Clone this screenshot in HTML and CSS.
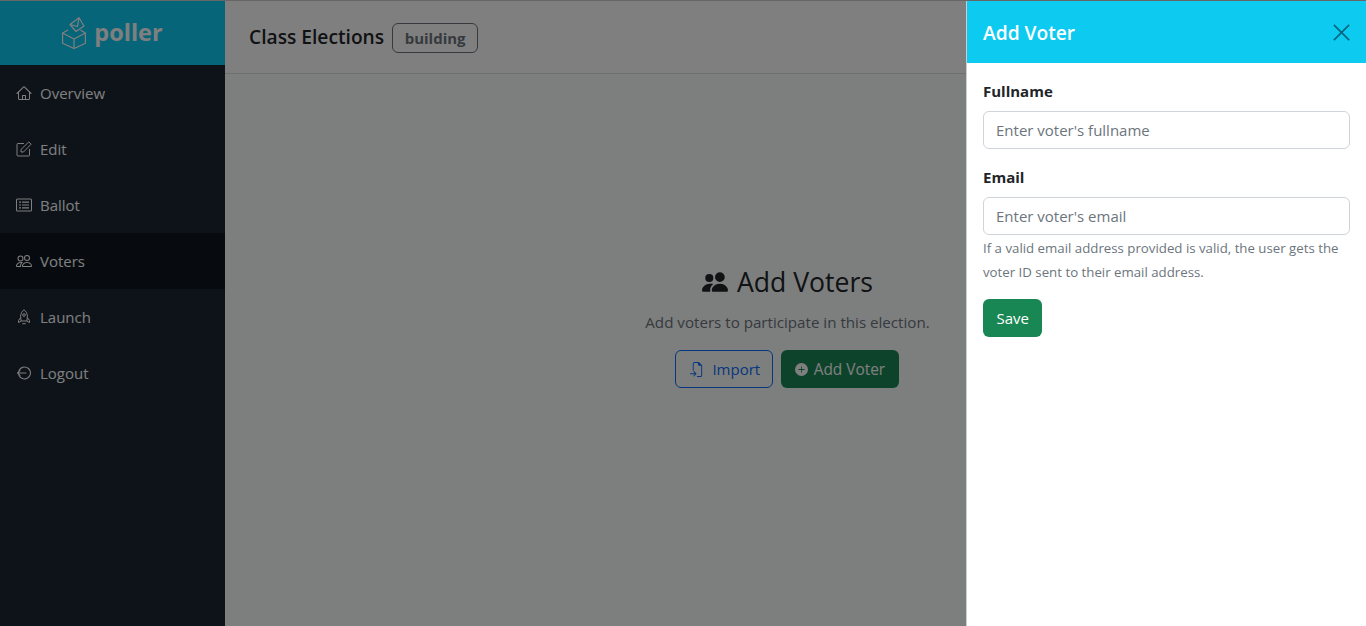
FILE: index.html
```html
<!DOCTYPE html>
<html>
<head lang="en">
    <meta charset="UTF-8">
    <title>Add Voter</title>
    <link rel="stylesheet" href="styles.css">
</head>
<body>
    <div class="app">
        <aside class="sidebar">
            <div class="brand">
                <svg class="brand-icon" viewBox="0 0 24 32" fill="none" stroke="#fff" stroke-width="1.2" stroke-linejoin="round">
                    <path d="M6 13L.6 16v10.200L12 31.500l11.400-5.300V16l-5-3"/>
                    <path d="M.6 16L12 22l11.400-6M12 22v9.500"/>
                    <path d="M8 7.500L17 .7l5 8.300-8 5.500z"/>
                    <path d="M8 7.500l7.500 2L17 .7"/>
                </svg>
                <span>poller</span>
            </div>
            <nav class="menu">
                <a class="menu-item">
                    <svg viewBox="0 0 16 16" fill="currentColor"><path d="M8.700 1.500a1 1 0 0 0-1.400 0L.6 8.100a.5.500 0 0 0 .7.800L2 8.200V13.500A1.500 1.500 0 0 0 3.500 15h9a1.500 1.500 0 0 0 1.500-1.500V8.200l.7.700a.5.500 0 0 0 .7-.8zM13 7.200v6.300a.5.500 0 0 1-.5.500H10V10.500a.5.500 0 0 0-.5-.5h-3a.5.500 0 0 0-.5.500V14H3.500a.5.500 0 0 1-.5-.5V7.200l5-5zM7 14v-3h2v3z"/></svg>
                    Overview
                </a>
                <a class="menu-item">
                    <svg viewBox="0 0 16 16" fill="none" stroke="currentColor" stroke-linejoin="round"><path d="M5 8.500L12.800.9l2.300 2.300L7.500 11H5z"/><path d="M8 2.500H2a1 1 0 0 0-1 1V14a1 1 0 0 0 1 1h10.500a1 1 0 0 0 1-1V8"/></svg>
                    Edit
                </a>
                <a class="menu-item">
                    <svg viewBox="0 0 16 16" fill="currentColor"><path d="M14.500 2.500a.5.500 0 0 1 .5.500v10a.5.500 0 0 1-.5.500h-13A.5.500 0 0 1 1 13V3a.5.500 0 0 1 .5-.5zm-13-1A1.500 1.500 0 0 0 0 3v10a1.500 1.500 0 0 0 1.500 1.500h13A1.500 1.500 0 0 0 16 13V3a1.500 1.500 0 0 0-1.500-1.500z"/><path d="M6 4.500h7v1.200H6zm0 2.900h7v1.200H6zm0 2.900h7v1.200H6zM3 4.500h2v1.200H3zm0 2.900h2v1.200H3zm0 2.900h2v1.200H3z"/></svg>
                    Ballot
                </a>
                <a class="menu-item active">
                    <svg viewBox="0 0 16 16" fill="currentColor"><path d="M15 14s1 0 1-1-1-4-5-4-5 3-5 4 1 1 1 1zm-7.978-1L7 12.996c.001-.264.167-1.030.760-1.720C8.312 10.629 9.282 10 11 10c1.717 0 2.687.630 3.240 1.276.593.690.758 1.457.760 1.720l-.008.002-.014.002zM11 7a2 2 0 1 0 0-4 2 2 0 0 0 0 4m3-2a3 3 0 1 1-6 0 3 3 0 0 1 6 0M6.936 9.280a6 6 0 0 0-1.230-.247A7 7 0 0 0 5 9c-4 0-5 3-5 4q0 1 1 1h4.216A2.200 2.200 0 0 1 5 13c0-1.010.377-2.042 1.090-2.904.243-.294.526-.569.846-.816M4.920 10A5.500 5.500 0 0 0 4 13H1c0-.260.164-1.030.760-1.724.545-.636 1.492-1.256 3.160-1.275zM1.500 5.500a3 3 0 1 1 6 0 3 3 0 0 1-6 0m3-2a2 2 0 1 0 0 4 2 2 0 0 0 0-4"/></svg>
                    Voters
                </a>
                <a class="menu-item">
                    <svg viewBox="0 0 16 16" fill="none" stroke="currentColor"><path d="M8 .8c2.300 1.600 3.400 4 3.400 6.700 0 1.500-.3 3-.7 4.500H5.300c-.4-1.500-.7-3-.7-4.500C4.600 4.800 5.700 2.400 8 .8z"/><circle cx="8" cy="6" r="1.300"/><path d="M4.700 8.500L2.500 11.500v2l2.800-1.500M11.300 8.500l2.200 3v2L10.700 12M6.300 14.700h3.400"/></svg>
                    Launch
                </a>
                <a class="menu-item">
                    <svg viewBox="0 0 16 16" fill="currentColor"><path d="M8.500 1.500a6.500 6.500 0 1 1-6 9 .5.500 0 1 1 .9-.4A5.500 5.500 0 1 0 3.400 5.900a.5.500 0 1 1-.9-.4 6.500 6.500 0 0 1 6-4z"/><path d="M10.500 8a.5.500 0 0 1-.5.500H2.700l1.700 1.600a.5.500 0 0 1-.7.700L1.200 8.400a.5.500 0 0 1 0-.8l2.500-2.400a.5.500 0 0 1 .7.700L2.700 7.500H10a.5.500 0 0 1 .5.500z"/></svg>
                    Logout
                </a>
            </nav>
        </aside>
        <main class="main">
            <header class="topbar">
                <h1>Class Elections</h1>
                <span class="status">building</span>
            </header>
            <section class="empty">
                <h2>
                    <svg viewBox="0 0 16 16" fill="currentColor"><path d="M7 14s-1 0-1-1 1-4 5-4 5 3 5 4-1 1-1 1zm4-6a3 3 0 1 0 0-6 3 3 0 0 0 0 6m-5.800 6A2.200 2.200 0 0 1 5 13c0-1.400.7-2.800 2-3.700A6.500 6.500 0 0 0 5 9c-4 0-5 3-5 4s1 1 1 1zM4.500 8a2.500 2.500 0 1 0 0-5 2.500 2.500 0 0 0 0 5"/></svg>
                    Add Voters
                </h2>
                <p>Add voters to participate in this election.</p>
                <div class="empty-actions">
                    <button class="btn btn-outline">
                        <svg viewBox="0 0 16 16" fill="currentColor"><path d="M4 2a2 2 0 0 1 2-2h4.500L14 3.500V14a2 2 0 0 1-2 2H8.500v-1H12a1 1 0 0 0 1-1V4h-2a1.500 1.500 0 0 1-1.500-1.500V1H6a1 1 0 0 0-1 1v7H4zM1 12.500a.5.500 0 0 1 .5-.5h4.800l-1.600-1.600a.5.500 0 0 1 .7-.7l2.500 2.450a.5.500 0 0 1 0 .7l-2.500 2.450a.5.500 0 0 1-.7-.7L6.300 13H1.500a.5.500 0 0 1-.5-.5z"/></svg>
                        Import
                    </button>
                    <button class="btn btn-green">
                        <svg viewBox="0 0 16 16" fill="currentColor"><path d="M16 8A8 8 0 1 1 0 8a8 8 0 0 1 16 0M8.500 4.500a.5.500 0 0 0-1 0v3h-3a.5.500 0 0 0 0 1h3v3a.5.500 0 0 0 1 0v-3h3a.5.500 0 0 0 0-1h-3z"/></svg>
                        Add Voter
                    </button>
                </div>
            </section>
        </main>
    </div>

    <div class="backdrop"></div>

    <div class="panel">
        <div class="panel-head">
            <span>Add Voter</span>
            <svg viewBox="0 0 16 16" fill="none" stroke="currentColor" stroke-width="1.500"><path d="M.8.8l14.400 14.400M15.200.8L.8 15.200"/></svg>
        </div>
        <form class="panel-body">
            <div class="field">
                <label>Fullname</label>
                <input type="text" placeholder="Enter voter's fullname">
            </div>
            <div class="field field-last">
                <label>Email</label>
                <input type="text" placeholder="Enter voter's email">
                <small>If a valid email address provided is valid, the user gets the voter ID sent to their email address.</small>
            </div>
            <button class="btn btn-save" type="button">Save</button>
        </form>
    </div>
</body>
</html>
```

FILE: styles.css
```css
* {
    margin: 0;
    padding: 0;
    box-sizing: border-box;
}
html,body{
    height: 100%;
    overflow: hidden;
}
body{
    font-family: "Open Sans", "Liberation Sans", sans-serif;
    font-size: 16px;
    color: #212529;
    background: #fff;
    border-top: 1px solid #ccc;
}
.app{
    display: flex;
    height: 100%;
}

/* sidebar */
.sidebar{
    width: 225px;
    flex-shrink: 0;
    background: #1a2733;
}
.brand{
    height: 64px;
    background: #0dcaf0;
    display: flex;
    align-items: center;
    justify-content: center;
    gap: 8px;
    color: #fff;
    font-size: 23.5px;
    font-weight: 700;
}
.brand span{
    margin-bottom: 3px;
}
.brand-icon{
    width: 24px;
    height: 32px;
}
.menu-item{
    height: 56px;
    display: flex;
    align-items: center;
    gap: 8px;
    padding-left: 16px;
    color: #fff;
    font-size: 15px;
}
.menu-item svg{
    width: 16px;
    height: 16px;
}
.menu-item.active{
    background: #0f1720;
}

/* main */
.main{
    flex: 1;
    display: flex;
    flex-direction: column;
    background: #fafdfc;
}
.topbar{
    height: 73px;
    flex-shrink: 0;
    background: #fff;
    border-bottom: 1px solid #ddd;
    display: flex;
    align-items: center;
    gap: 8px;
    padding-left: 24px;
}
.topbar h1{
    font-size: 19.2px;
    font-weight: 600;
    margin-bottom: 2px;
}
.status{
    height: 30px;
    margin-top: 2px;
    padding: 0 11.5px;
    border: 1px solid #6c757d;
    border-radius: 6px;
    color: #6c757d;
    font-size: 15px;
    font-weight: 700;
    line-height: 28px;
}
.empty{
    flex: 1;
    display: flex;
    flex-direction: column;
    align-items: center;
    justify-content: center;
    padding: 0 16px 48px 0;
}
.empty h2{
    font-size: 26.6px;
    font-weight: 400;
    display: flex;
    align-items: center;
    gap: 9px;
}
.empty h2 svg{
    width: 26px;
    height: 26px;
}
.empty p{
    margin-top: 12px;
    color: #6c757d;
    font-size: 15.15px;
}
.empty-actions{
    margin-top: 18px;
    padding-right: 1px;
    display: flex;
    gap: 8px;
}
.btn{
    height: 38px;
    border-radius: 6px;
    font-family: inherit;
    font-size: 15px;
    padding: 0 12.5px;
    display: flex;
    align-items: center;
    border: 1px solid transparent;
}
.btn-outline{
    border-color: #0d6efd;
    color: #0d6efd;
    background: transparent;
    gap: 8px;
    padding: 0 12px 0 13px;
}
.btn-outline svg{
    width: 15px;
    height: 15px;
}
.btn-green{
    background: #198754;
    color: #fff;
    gap: 6px;
    font-size: 15.4px;
}
.btn-green svg{
    width: 13px;
    height: 13px;
}

/* overlay + add voter panel */
.backdrop{
    position: fixed;
    top: 0;
    left: 0;
    width: 100%;
    height: 100%;
    background: #000;
    opacity: .5;
}
.panel{
    position: fixed;
    top: 1px;
    right: 0;
    bottom: 0;
    width: 400px;
    background: #fff;
    border-left: 1px solid rgba(0,0,0,.2);
    display: flex;
    flex-direction: column;
}
.panel-head{
    height: 62px;
    background: #0dcaf0;
    color: #fff;
    font-size: 19.2px;
    font-weight: 600;
    display: flex;
    align-items: center;
    justify-content: space-between;
    padding: 0 16px;
}
.panel-head svg{
    width: 17px;
    height: 17px;
    color: #05677d;
}
.panel-body{
    padding: 16px;
}
.field{
    margin-bottom: 16px;
}
.field-last{
    margin-bottom: 15px;
}
.field label{
    display: block;
    font-size: 15px;
    font-weight: 700;
    margin-bottom: 8px;
    line-height: 24px;
}
.field input{
    display: block;
    width: 100%;
    height: 38px;
    padding: 0 12px;
    border: 1px solid #ced4da;
    border-radius: 6px;
    font-family: inherit;
    font-size: 15px;
}
.field input::placeholder{
    color: #6c757d;
}
.field small{
    display: block;
    margin-top: 1px;
    color: #6c757d;
    font-size: 13.25px;
    line-height: 24px;
}
.btn-save{
    background: #198754;
    color: #fff;
}
```
